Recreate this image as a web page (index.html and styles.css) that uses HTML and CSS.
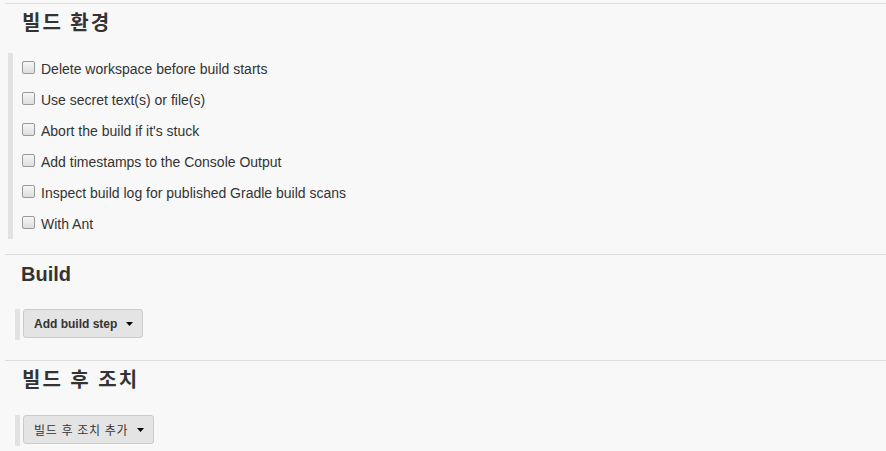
FILE: index.html
```html
<!DOCTYPE html>
<html lang="ko">
<head>
<meta charset="utf-8">
<title>빌드 설정</title>
<link rel="stylesheet" href="styles.css">
</head>
<body>
<div class="page">
  <section class="section section-env">
    <h2 class="section-title ko">빌드 환경</h2>
    <div class="options">
      <label class="option"><input type="checkbox" class="cb"><span class="option-label">Delete workspace before build starts</span></label>
      <label class="option"><input type="checkbox" class="cb"><span class="option-label">Use secret text(s) or file(s)</span></label>
      <label class="option"><input type="checkbox" class="cb"><span class="option-label">Abort the build if it's stuck</span></label>
      <label class="option"><input type="checkbox" class="cb"><span class="option-label">Add timestamps to the Console Output</span></label>
      <label class="option"><input type="checkbox" class="cb"><span class="option-label">Inspect build log for published Gradle build scans</span></label>
      <label class="option"><input type="checkbox" class="cb"><span class="option-label">With Ant</span></label>
    </div>
  </section>
  <section class="section section-build">
    <h2 class="section-title">Build</h2>
    <div class="actions">
      <button class="dropdown-btn bold" type="button">Add build step<svg class="caret" width="7" height="4" viewBox="0 0 7 4"><polygon points="0,0 7,0 3.5,4" fill="#000"/></svg></button>
    </div>
  </section>
  <section class="section section-post">
    <h2 class="section-title ko">빌드 후 조치</h2>
    <div class="actions">
      <button class="dropdown-btn" type="button"><span class="ko-btn">빌드 후 조치 추가</span><svg class="caret" width="7" height="4" viewBox="0 0 7 4"><polygon points="0,0 7,0 3.5,4" fill="#000"/></svg></button>
    </div>
  </section>
</div>
</body>
</html>
```
FILE: styles.css
```css
html, body {
  margin: 0;
  padding: 0;
  background: #f8f8f8;
}
body {
  font-family: "Liberation Sans", Arial, "Noto Sans CJK KR", sans-serif;
  color: #333;
  height: 451px;
  overflow: hidden;
}
.page {
  padding-top: 3px;
}
.section {
  margin-left: 5px;
  border-top: 1px solid #dedede;
}
.section-title {
  margin: 0;
  padding: 7px 0 0 16px;
  font-size: 20px;
  line-height: 24px;
  font-weight: bold;
  color: #333;
}
.section-title.ko {
  padding-left: 17px;
  letter-spacing: 2px;
}
.section-env .options {
  margin: 18px 0 15px 3px;
  border-left: 5px solid #e2e2e2;
  padding: 8px 0 6px 9px;
  display: flex;
  flex-direction: column;
  gap: 14px;
}
.option {
  display: flex;
  align-items: flex-start;
  gap: 6px;
  font-size: 14px;
  line-height: 17px;
  color: #333;
}
.cb {
  -webkit-appearance: none;
  appearance: none;
  margin: 0;
  width: 13px;
  height: 13px;
  flex: none;
  box-sizing: border-box;
  border: 1px solid #9a9a9a;
  border-radius: 2px;
  background: linear-gradient(#f6f6f6, #dedede);
}
.option-label {
  white-space: nowrap;
}
.actions {
  margin: 23px 0 20px 10px;
  border-left: 5px solid #e2e2e2;
  padding: 0 0 2px 3px;
  display: flex;
}
.dropdown-btn {
  display: flex;
  align-items: center;
  gap: 9px;
  height: 29px;
  box-sizing: border-box;
  padding: 0 9px 0 10px;
  border: 1px solid #cbcbcb;
  border-radius: 3px;
  background: #e4e4e4;
  font-family: "Liberation Sans", Arial, "Noto Sans CJK KR", sans-serif;
  font-size: 12px;
  color: #333;
  cursor: pointer;
}
.dropdown-btn.bold {
  font-weight: bold;
}
.ko-btn {
  letter-spacing: 0.7px;
}
.caret {
  display: block;
  flex: none;
}
```
